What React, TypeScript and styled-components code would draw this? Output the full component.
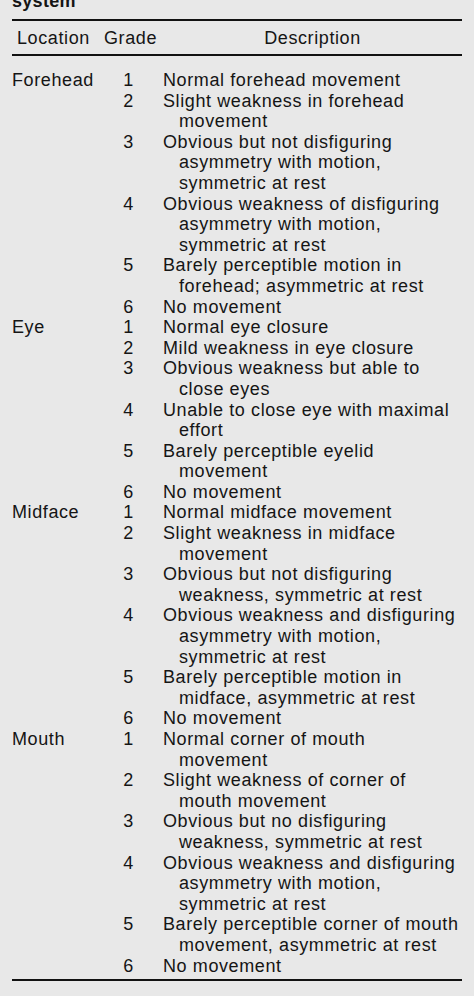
import * as React from 'react';
import styled, { createGlobalStyle } from 'styled-components';

const GlobalStyle = createGlobalStyle`
  html, body {
    margin: 0;
    padding: 0;
    background: #e8e8e8;
  }
  body {
    font-family: "Liberation Sans", Arial, Helvetica, sans-serif;
    color: #151515;
  }
`;

const Page = styled.div`
  padding: 0 12px;
  overflow: hidden;
  min-height: 996px;
  box-sizing: border-box;
`;

const Caption = styled.div`
  margin-top: -9px;
  font-size: 18px;
  line-height: 20px;
  font-weight: bold;
  letter-spacing: 0.3px;
`;

const Rule = styled.div<{ $gap?: number }>`
  height: 2px;
  background: #111;
  margin-top: ${props => props.$gap || 0}px;
`;

const Row = styled.div`
  display: grid;
  grid-template-columns: 92px 49px 1fr;
  font-size: 18px;
  letter-spacing: 0.6px;
`;

const HeaderRow = styled(Row)`
  padding: 7px 0 6px;
  line-height: 20px;
`;

const HeaderCell = styled.div<{ $align?: string; $pad?: number }>`
  text-align: ${props => props.$align || 'left'};
  padding-left: ${props => props.$pad || 0}px;
  white-space: nowrap;
`;

const Body = styled.div`
  padding: 14px 0 3px;
`;

const GradeRow = styled(Row)`
  line-height: 20.6px;
`;

const LocationCell = styled.div`
  white-space: nowrap;
`;

const GradeCell = styled.div`
  text-align: center;
`;

const DescCell = styled.div`
  padding-left: 10px;
`;

const Line = styled.div<{ $wrap?: boolean }>`
  white-space: nowrap;
  padding-left: ${props => (props.$wrap ? '16px' : '0')};
`;

interface Section {
  location: string;
  grades: string[][];
}

const sections: Section[] = [
  {
    location: 'Forehead',
    grades: [
      ['Normal forehead movement'],
      ['Slight weakness in forehead', 'movement'],
      ['Obvious but not disfiguring', 'asymmetry with motion,', 'symmetric at rest'],
      ['Obvious weakness of disfiguring', 'asymmetry with motion,', 'symmetric at rest'],
      ['Barely perceptible motion in', 'forehead; asymmetric at rest'],
      ['No movement']
    ]
  },
  {
    location: 'Eye',
    grades: [
      ['Normal eye closure'],
      ['Mild weakness in eye closure'],
      ['Obvious weakness but able to', 'close eyes'],
      ['Unable to close eye with maximal', 'effort'],
      ['Barely perceptible eyelid', 'movement'],
      ['No movement']
    ]
  },
  {
    location: 'Midface',
    grades: [
      ['Normal midface movement'],
      ['Slight weakness in midface', 'movement'],
      ['Obvious but not disfiguring', 'weakness, symmetric at rest'],
      ['Obvious weakness and disfiguring', 'asymmetry with motion,', 'symmetric at rest'],
      ['Barely perceptible motion in', 'midface, asymmetric at rest'],
      ['No movement']
    ]
  },
  {
    location: 'Mouth',
    grades: [
      ['Normal corner of mouth', 'movement'],
      ['Slight weakness of corner of', 'mouth movement'],
      ['Obvious but no disfiguring', 'weakness, symmetric at rest'],
      ['Obvious weakness and disfiguring', 'asymmetry with motion,', 'symmetric at rest'],
      ['Barely perceptible corner of mouth', 'movement, asymmetric at rest'],
      ['No movement']
    ]
  }
];

const App: React.FC = () => (
  <Page>
    <GlobalStyle />
    <Caption>system</Caption>
    <Rule $gap={8} />
    <HeaderRow>
      <HeaderCell $pad={5}>Location</HeaderCell>
      <HeaderCell $align="center">Grade</HeaderCell>
      <HeaderCell $align="center" $pad={10}>
        Description
      </HeaderCell>
    </HeaderRow>
    <Rule />
    <Body>
      {sections.map(section =>
        section.grades.map((lines, i) => (
          <GradeRow key={section.location + i}>
            <LocationCell>{i === 0 ? section.location : ''}</LocationCell>
            <GradeCell>{i + 1}</GradeCell>
            <DescCell>
              {lines.map((text, j) => (
                <Line key={j} $wrap={j > 0}>
                  {text}
                </Line>
              ))}
            </DescCell>
          </GradeRow>
        ))
      )}
    </Body>
    <Rule />
  </Page>
);

export default App;
